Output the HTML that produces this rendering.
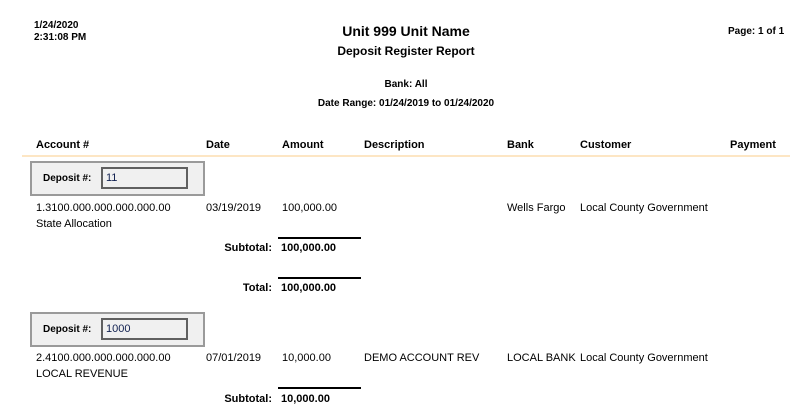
<!DOCTYPE html>
<html><head><style>
body{margin:0;width:812px;height:412px;background:#fff;font-family:"Liberation Sans",Arial,sans-serif;color:#000;position:relative;overflow:hidden}
.a{position:absolute;white-space:nowrap;font-size:11px;line-height:13px}
.b{font-weight:bold}
.box{position:absolute;background:#f0f0f0;border:2px solid #9a9a9a;box-sizing:border-box}
.inn{position:absolute;border:2px solid #606060;box-sizing:border-box;font-size:11px;line-height:18px;padding-left:3px;color:#102050}
.ln{position:absolute;height:2px;background:#000}
</style></head><body>
<div class="a b" style="left:34px;top:20px;font-size:10px;line-height:12px">1/24/2020<br>2:31:08 PM</div>
<div class="a b" style="left:0;width:812px;text-align:center;top:23px;font-size:14px;line-height:16px">Unit 999 Unit Name</div>
<div class="a b" style="left:0;width:812px;text-align:center;top:45px;font-size:12px">Deposit Register Report</div>
<div class="a b" style="left:0;width:812px;text-align:center;top:78px;font-size:10px">Bank: All</div>
<div class="a b" style="left:0;width:812px;text-align:center;top:97px;font-size:10px">Date Range: 01/24/2019 to 01/24/2020</div>
<div class="a b" style="left:728px;top:25px;font-size:10px">Page: 1 of 1</div>

<div class="a b" style="left:36px;top:139px">Account #</div>
<div class="a b" style="left:206px;top:139px">Date</div>
<div class="a b" style="left:282px;top:139px">Amount</div>
<div class="a b" style="left:364px;top:139px">Description</div>
<div class="a b" style="left:507px;top:139px">Bank</div>
<div class="a b" style="left:580px;top:139px">Customer</div>
<div class="a b" style="left:730px;top:139px">Payment</div>
<div style="position:absolute;left:22px;top:155px;width:768px;height:2px;background:#fde6c4"></div>

<div class="box" style="left:30px;top:161px;width:175px;height:35px"></div>
<div class="a b" style="left:43px;top:172px;font-size:10px">Deposit #:</div>
<div class="inn" style="left:101px;top:167px;width:87px;height:22px">11</div>

<div class="a" style="left:36px;top:202px">1.3100.000.000.000.000.00</div>
<div class="a" style="left:36px;top:218px">State Allocation</div>
<div class="a" style="left:206px;top:202px">03/19/2019</div>
<div class="a" style="left:282px;top:202px">100,000.00</div>
<div class="a" style="left:507px;top:202px">Wells Fargo</div>
<div class="a" style="left:580px;top:202px">Local County Government</div>

<div class="ln" style="left:278px;top:237px;width:83px"></div>
<div class="a b" style="left:200px;width:72px;text-align:right;top:242px">Subtotal:</div>
<div class="a b" style="left:281px;top:242px">100,000.00</div>
<div class="ln" style="left:278px;top:277px;width:83px"></div>
<div class="a b" style="left:200px;width:72px;text-align:right;top:282px">Total:</div>
<div class="a b" style="left:281px;top:282px">100,000.00</div>

<div class="box" style="left:30px;top:312px;width:175px;height:35px"></div>
<div class="a b" style="left:43px;top:323px;font-size:10px">Deposit #:</div>
<div class="inn" style="left:101px;top:318px;width:87px;height:22px">1000</div>

<div class="a" style="left:36px;top:352px">2.4100.000.000.000.000.00</div>
<div class="a" style="left:36px;top:368px">LOCAL REVENUE</div>
<div class="a" style="left:206px;top:352px">07/01/2019</div>
<div class="a" style="left:282px;top:352px">10,000.00</div>
<div class="a" style="left:364px;top:352px">DEMO ACCOUNT REV</div>
<div class="a" style="left:507px;top:352px">LOCAL BANK</div>
<div class="a" style="left:580px;top:352px">Local County Government</div>

<div class="ln" style="left:278px;top:387px;width:83px"></div>
<div class="a b" style="left:200px;width:72px;text-align:right;top:393px">Subtotal:</div>
<div class="a b" style="left:281px;top:393px">10,000.00</div>
</body></html>
